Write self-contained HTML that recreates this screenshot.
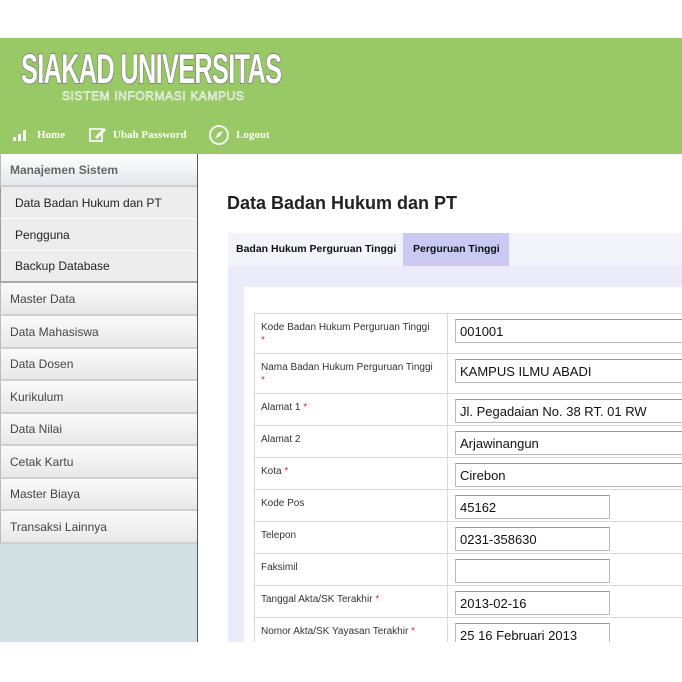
<!DOCTYPE html>
<html><head><meta charset="utf-8"><style>
*{margin:0;padding:0;box-sizing:border-box}
body{width:682px;height:682px;overflow:hidden;background:#fff;font-family:"Liberation Sans",sans-serif;position:relative}
.a{position:absolute}
#hdr{left:0;top:38px;width:682px;height:116px;background:#98c966}
.logo{left:21px;top:45px;font-family:"Liberation Sans",sans-serif;font-weight:bold;font-size:42px;color:#fff;letter-spacing:-1px;transform:scaleX(0.6);transform-origin:left;-webkit-text-stroke:1.5px #6a6a6a;paint-order:stroke fill;text-shadow:1px 1px 0 #888;white-space:nowrap}
.sub{left:62px;top:89px;font-family:"Liberation Sans",sans-serif;font-size:12px;color:#98c966;-webkit-text-stroke:0.7px #f0f0f0;letter-spacing:0.6px;white-space:nowrap}
.nav{top:129px;font-family:"Liberation Serif",serif;font-weight:bold;font-size:11px;color:#fff}
#side{left:0;top:154px;width:198px;height:488px;background:#d2dfe3;border-right:1px solid #555}
.mi{position:absolute;left:0;width:197px;font-size:12px;color:#444;padding-left:9px;background:linear-gradient(#fafafa,#e8e8e8);border-bottom:2px solid #cfcfcf;border-left:1px solid #bbb}
.si{position:absolute;left:0;width:197px;font-size:12px;color:#222;padding-left:14px;background:#ededed;border-bottom:1px solid #fff;border-left:1px solid #999}
#panel{left:228px;top:266px;width:454px;height:376px;background:#ebebfa}
#box{left:244px;top:287px;width:438px;height:355px;background:#fff}
table{position:absolute;left:254px;top:313px;border-collapse:collapse;width:440px;table-layout:fixed}
td{border:1px solid #d8d8d8;vertical-align:top;font-size:10px;color:#333;overflow:hidden}
td.l{width:193px;padding:7px 6px 0 6px;line-height:13px}
td.v{padding:5px 0 0 7px}
.r{color:#c33}
.in{border:1px solid #bbb;border-top-color:#999;height:24px;font-family:"Liberation Sans",sans-serif;font-size:13px;color:#111;padding:4px 4px;background:#fff;white-space:nowrap;overflow:hidden}
.w{width:240px}.s{width:155px}
</style></head><body>
<div id="hdr" class="a"></div>
<div class="a logo">SIAKAD UNIVERSITAS</div>
<div class="a sub">SISTEM INFORMASI KAMPUS</div>
<svg class="a" style="left:12px;top:128px" width="20" height="14"><rect x="1" y="9" width="3" height="4" fill="#fff"/><rect x="6" y="6" width="3" height="7" fill="#fff"/><rect x="11" y="2" width="3" height="11" fill="#fff"/></svg>
<div class="a nav" style="left:37px">Home</div>
<svg class="a" style="left:89px;top:126px" width="18" height="17"><rect x="1" y="3" width="12" height="12" fill="none" stroke="#eee" stroke-width="2"/><path d="M6 11 L15 2 L17 4 L8 13 Z" fill="#fff"/></svg>
<div class="a nav" style="left:113px">Ubah Password</div>
<svg class="a" style="left:208px;top:124px" width="22" height="22"><circle cx="11" cy="11" r="9" fill="none" stroke="#f2f2f2" stroke-width="2"/><path d="M7 15 L10 9 L15 7 L12 12 Z" fill="#fff"/></svg>
<div class="a nav" style="left:236px">Logout</div>

<div id="side" class="a">
<div class="mi" style="top:0;height:33px;line-height:33px;font-weight:bold;color:#666;background:linear-gradient(#fff,#e4e8ec)">Manajemen Sistem</div>
<div class="si" style="top:33px;height:32px;line-height:32px">Data Badan Hukum dan PT</div>
<div class="si" style="top:65px;height:32px;line-height:32px">Pengguna</div>
<div class="si" style="top:97px;height:32px;line-height:31px;border-bottom:2px solid #aaa">Backup Database</div>
<div class="mi" style="top:129px;height:33px;line-height:32px">Master Data</div>
<div class="mi" style="top:162px;height:33px;line-height:32px">Data Mahasiswa</div>
<div class="mi" style="top:195px;height:32px;line-height:31px">Data Dosen</div>
<div class="mi" style="top:227px;height:33px;line-height:32px">Kurikulum</div>
<div class="mi" style="top:260px;height:32px;line-height:31px">Data Nilai</div>
<div class="mi" style="top:292px;height:33px;line-height:32px">Cetak Kartu</div>
<div class="mi" style="top:325px;height:32px;line-height:31px">Master Biaya</div>
<div class="mi" style="top:357px;height:33px;line-height:32px">Transaksi Lainnya</div>
</div>

<div class="a" style="left:227px;top:193px;font-size:18px;font-weight:bold;color:#222">Data Badan Hukum dan PT</div>
<div class="a" style="left:228px;top:233px;width:454px;height:33px;background:#f3f3fc"></div>
<div class="a" style="left:236px;top:243px;font-size:10.5px;font-weight:bold;color:#111">Badan Hukum Perguruan Tinggi</div>
<div class="a" style="left:403px;top:233px;width:106px;height:33px;background:#c9c9f2"></div>
<div class="a" style="left:413px;top:243px;font-size:10.5px;font-weight:bold;color:#111">Perguruan Tinggi</div>
<div id="panel" class="a"></div>
<div id="box" class="a"></div>
<table>
<tr style="height:40px"><td class="l">Kode Badan Hukum Perguruan Tinggi<br><span class="r">*</span></td><td class="v"><div class="in w">001001</div></td></tr>
<tr style="height:40px"><td class="l">Nama Badan Hukum Perguruan Tinggi<br><span class="r">*</span></td><td class="v"><div class="in w">KAMPUS ILMU ABADI</div></td></tr>
<tr style="height:32px"><td class="l">Alamat 1 <span class="r">*</span></td><td class="v"><div class="in w">Jl. Pegadaian No. 38 RT. 01 RW</div></td></tr>
<tr style="height:32px"><td class="l">Alamat 2</td><td class="v"><div class="in w">Arjawinangun</div></td></tr>
<tr style="height:32px"><td class="l">Kota <span class="r">*</span></td><td class="v"><div class="in w">Cirebon</div></td></tr>
<tr style="height:32px"><td class="l">Kode Pos</td><td class="v"><div class="in s">45162</div></td></tr>
<tr style="height:32px"><td class="l">Telepon</td><td class="v"><div class="in s">0231-358630</div></td></tr>
<tr style="height:32px"><td class="l">Faksimil</td><td class="v"><div class="in s"></div></td></tr>
<tr style="height:32px"><td class="l">Tanggal Akta/SK Terakhir <span class="r">*</span></td><td class="v"><div class="in s">2013-02-16</div></td></tr>
<tr style="height:33px"><td class="l">Nomor Akta/SK Yayasan Terakhir <span class="r">*</span></td><td class="v"><div class="in s">25 16 Februari 2013</div></td></tr>
</table>
<div class="a" style="left:0;top:642px;width:682px;height:40px;background:#fff"></div>
</body></html>
